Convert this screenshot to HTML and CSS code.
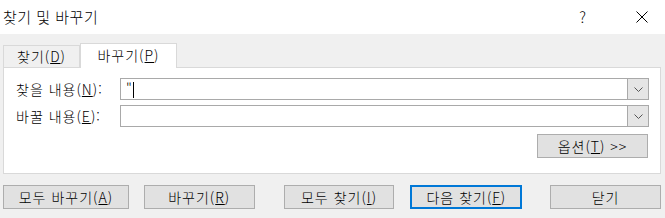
FILE: index.html
```html
<!DOCTYPE html>
<html lang="ko">
<head>
    <meta charset="UTF-8">
    <title>찾기 및 바꾸기</title>
    <link rel="stylesheet" href="styles.css">
</head>
<body>
    <!-- Title bar -->
    <div class="titlebar">
        <span class="title">찾기 및 바꾸기</span>
        <span class="help">?</span>
        <span class="close">
            <svg width="12" height="12" viewBox="0 0 12 12"><path d="M0.5 0.5 L11.5 11.5 M11.5 0.5 L0.5 11.5" stroke="#000" stroke-width="1"/></svg>
        </span>
    </div>

    <div class="body">
        <div class="tabs">
            <div class="tab">찾기(<u>D</u>)</div>
            <div class="tab active">바꾸기(<u>P</u>)</div>
        </div>

        <div class="panel">
            <div class="row">
                <label class="label">찾을 내용(<u>N</u>):</label>
                <div class="combo">
                    <div class="combo-text">"<span class="caret"></span></div>
                    <div class="combo-btn">
                        <svg width="9" height="5" viewBox="0 0 9 5"><path d="M0.5 0.5 L4.5 4.5 L8.5 0.5" fill="none" stroke="#555" stroke-width="1"/></svg>
                    </div>
                </div>
            </div>
            <div class="row">
                <label class="label">바꿀 내용(<u>E</u>):</label>
                <div class="combo">
                    <div class="combo-text"></div>
                    <div class="combo-btn">
                        <svg width="9" height="5" viewBox="0 0 9 5"><path d="M0.5 0.5 L4.5 4.5 L8.5 0.5" fill="none" stroke="#555" stroke-width="1"/></svg>
                    </div>
                </div>
            </div>
            <div class="options-row">
                <button class="btn options">옵션(<u>T</u>) &gt;&gt;</button>
            </div>
        </div>

        <div class="actions">
            <button class="btn b-all-replace">모두 바꾸기(<u>A</u>)</button>
            <button class="btn b-replace">바꾸기(<u>R</u>)</button>
            <button class="btn b-all-find">모두 찾기(<u>I</u>)</button>
            <button class="btn b-next default">다음 찾기(<u>F</u>)</button>
            <button class="btn b-close">닫기</button>
        </div>
    </div>
</body>
</html>
```

FILE: styles.css
```css
body {
    margin: 0;
    padding: 0;
    width: 665px;
    height: 218px;
    overflow: hidden;
    font-family: "Noto Sans CJK KR", "Noto Sans", sans-serif;
    font-size: 14px;
    font-weight: 300;
    letter-spacing: 1px;
    color: #000;
    background-color: #f0f0f0;
}
u {
    text-decoration: underline;
    text-underline-offset: 1px;
}
.titlebar {
    height: 34px;
    background-color: #fff;
    display: flex;
    align-items: center;
    padding-left: 3px;
}
.title {
    font-size: 15px;
    letter-spacing: 0.5px;
    flex: 1;
    margin-top: -2px;
}
.help {
    font-size: 15px;
    margin-right: 49px;
    margin-top: -2px;
}
.close {
    display: flex;
    margin-right: 17px;
    margin-top: -1px;
}
.body {
    padding: 9px 4px 0 3px;
}
.tabs {
    display: flex;
    align-items: flex-end;
    height: 24px;
}
.tab {
    box-sizing: border-box;
    height: 22px;
    width: 77px;
    border: 1px solid #d9d9d9;
    border-bottom: none;
    text-align: center;
    line-height: 20px;
}
.tab.active {
    height: 25px;
    width: 97px;
    background-color: #fff;
    margin-bottom: -1px;
    position: relative;
    line-height: 22px;
}
.panel {
    box-sizing: border-box;
    height: 107px;
    background-color: #fff;
    border: 1px solid #d9d9d9;
    padding: 10px 11px 0 12px;
}
.row {
    display: flex;
    align-items: center;
    height: 22px;
    margin-bottom: 5px;
}
.label {
    width: 104px;
}
.combo {
    flex: 1;
    box-sizing: border-box;
    height: 22px;
    border: 1px solid #a9a9a9;
    display: flex;
}
.combo-text {
    flex: 1;
    padding-left: 5px;
    line-height: 20px;
}
.caret {
    display: inline-block;
    width: 1px;
    height: 16px;
    background-color: #000;
    vertical-align: -3px;
}
.combo-btn {
    width: 20px;
    background-color: #e5e5e5;
    border-left: 1px solid #a9a9a9;
    display: flex;
    align-items: center;
    justify-content: center;
}
.options-row {
    display: flex;
    justify-content: flex-end;
    margin-top: 7px;
    padding-right: 1px;
}
.btn {
    box-sizing: border-box;
    height: 24px;
    width: 112px;
    background-color: #e1e1e1;
    border: 1px solid #adadad;
    font-family: "Noto Sans CJK KR", "Noto Sans", sans-serif;
    font-size: 14px;
    font-weight: 300;
    letter-spacing: 1px;
    color: #000;
    padding: 0;
    line-height: 20px;
}
.options {
    width: 111px;
}
.actions {
    display: flex;
    margin-top: 11px;
}
.b-all-replace {
    width: 126px;
    margin-right: 15px;
}
.b-replace {
    width: 111px;
    margin-right: 29px;
}
.b-all-find {
    width: 111px;
    margin-right: 16px;
}
.b-next {
    width: 112px;
    margin-right: 28px;
}
.default {
    border: 2px solid #0078d7;
}
.b-close {
    width: 111px;
}
```
